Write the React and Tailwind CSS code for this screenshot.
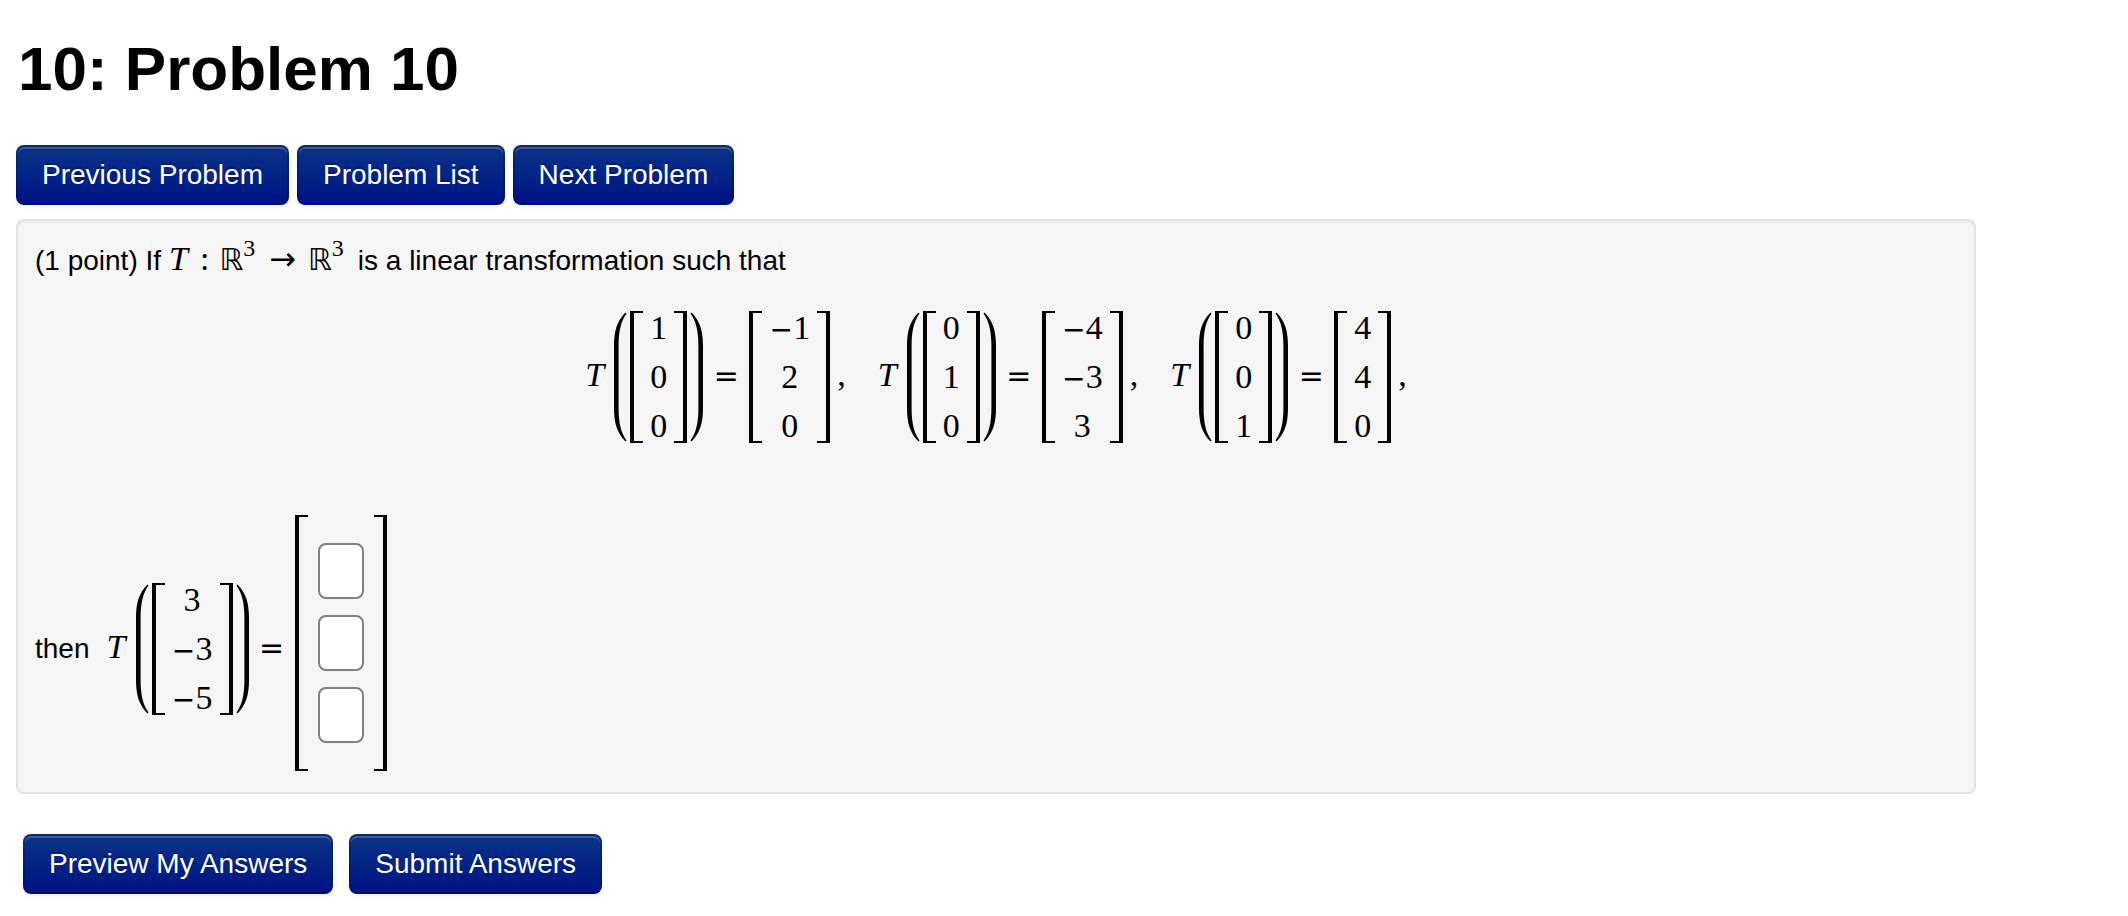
import React from 'react';

const Button = ({ children }) => (
  <button
    type="button"
    className="rounded-lg border-2 border-black/15 bg-linear-to-b from-[#0d3387] to-[#000e86] bg-origin-border px-6 text-[28px] leading-[56px] text-white shadow-[inset_0_2px_0_rgba(255,255,255,0.2),0_2px_4px_rgba(0,0,0,0.05)] [text-shadow:0_-2px_0_rgba(0,0,0,0.25)]"
  >
    {children}
  </button>
);

const Paren = ({ right }) => (
  <svg
    viewBox="0 0 13 132"
    className={`h-[132px] w-[13px] shrink-0 ${right ? 'rotate-180' : ''}`}
    aria-hidden="true"
  >
    <path d="M11.500 1.500C3 10 0 20 0 35V97C0 112 3 122 11.500 130.500L12.500 129.500C7 122 4.600 112 4.600 97V35C4.600 20 7 10 12.500 2.500Z" />
  </svg>
);

const Brackets = ({ children }) => (
  <div className="flex">
    <div className="w-[13px] border-y-2 border-l-4 border-black" />
    {children}
    <div className="w-[13px] border-y-2 border-r-4 border-black" />
  </div>
);

const Minus = () => (
  <span className="flex w-6 justify-center font-['DejaVu_Sans'] text-[28px]">−</span>
);

const Vector = ({ values }) => (
  <Brackets>
    <div className="flex flex-col items-center gap-[15px] px-[7px]">
      {values.map((v, i) => (
        <div key={i} className="flex h-[34px] items-baseline">
          {v < 0 && <Minus />}
          <span>{Math.abs(v)}</span>
        </div>
      ))}
    </div>
  </Brackets>
);

const Equals = () => (
  <span className="mx-[9px] flex w-7 justify-center pb-0.5 font-['DejaVu_Sans'] text-[30px]">
    =
  </span>
);

const Applied = ({ values }) => (
  <>
    <i className="w-[19px] pb-1">T</i>
    <div className="ml-2.5 flex gap-[3px]">
      <Paren />
      <Vector values={values} />
      <Paren right />
    </div>
    <Equals />
  </>
);

const Equation = ({ input, output }) => (
  <div className="flex items-center">
    <Applied values={input} />
    <Vector values={output} />
    <span className="ml-[7px] pb-1">,</span>
  </div>
);

const Space = () => (
  <span className="flex items-baseline">
    <span className="font-['DejaVu_Sans'] text-[30px]">ℝ</span>
    <sup className="relative -top-[14px] align-baseline text-2xl leading-none">3</sup>
  </span>
);

export default function App() {
  return (
    <main className="bg-white pt-8 pr-[152px] pb-[22px] pl-4 font-['Liberation_Sans',Arial,sans-serif] text-[28px] text-black">
      <h1 className="pl-0.5 text-[62px] leading-[74px] font-bold">10: Problem 10</h1>

      <nav className="mt-[39px] flex gap-2">
        <Button>Previous Problem</Button>
        <Button>Problem List</Button>
        <Button>Next Problem</Button>
      </nav>

      <form>
        <section className="mt-3.5 rounded-lg border-2 border-[#e3e3e3] bg-[#f5f5f5] px-[17px] pt-[18px] pb-[9px] shadow-[inset_0_2px_2px_rgba(0,0,0,0.05)]">
          <div className="flex h-10 items-baseline leading-10">
            <span>(1 point) If</span>
            <span className="ml-2 flex items-baseline font-['Liberation_Serif',serif] text-[34px]">
              <i>T</i>
              <span className="mr-2.5 ml-3">:</span>
              <Space />
              <span className="mr-3 ml-3.5 font-['DejaVu_Sans'] text-[32px]">→</span>
              <Space />
            </span>
            <span className="ml-3.5">is a linear transformation such that</span>
          </div>

          <div className="mt-8 flex justify-center gap-8 font-['Liberation_Serif',serif] text-[34px] leading-[34px]">
            <Equation input={[1, 0, 0]} output={[-1, 2, 0]} />
            <Equation input={[0, 1, 0]} output={[-4, -3, 3]} />
            <Equation input={[0, 0, 1]} output={[4, 4, 0]} />
          </div>

          <div className="mt-[72px] flex items-center">
            <span>then</span>
            <div className="ml-[17px] flex items-center font-['Liberation_Serif',serif] text-[34px] leading-[34px]">
              <Applied values={[3, -3, -5]} />
              <div className="mb-3">
                <Brackets>
                  <div className="flex h-64 flex-col justify-center gap-4 px-2.5">
                    {['First', 'Second', 'Third'].map((name) => (
                      <input
                        key={name}
                        type="text"
                        aria-label={`${name} component`}
                        className="h-14 w-[46px] rounded-lg border-2 border-[#808080] bg-white text-center text-[28px]"
                      />
                    ))}
                  </div>
                </Brackets>
              </div>
            </div>
          </div>
        </section>

        <div className="mt-10 ml-[7px] flex gap-4">
          <Button>Preview My Answers</Button>
          <Button>Submit Answers</Button>
        </div>
      </form>
    </main>
  );
}
